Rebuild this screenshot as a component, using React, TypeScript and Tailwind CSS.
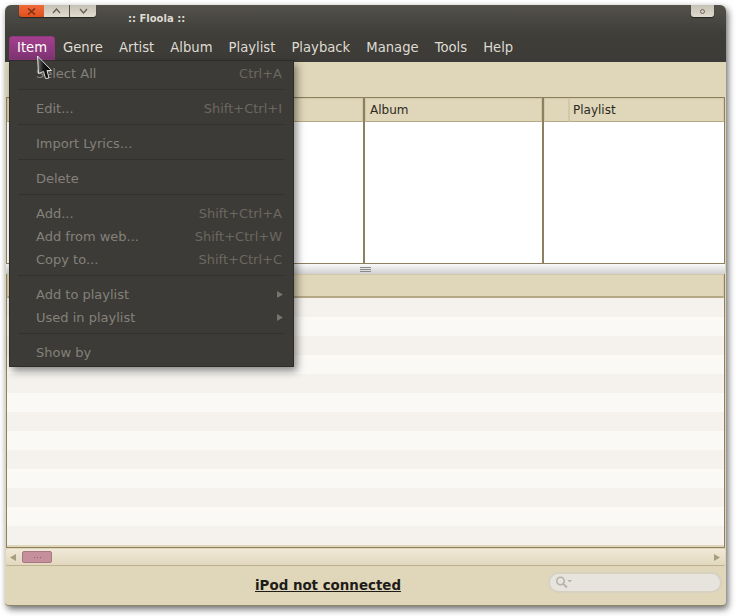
import React from "react";

const menus = ["Genre", "Artist", "Album", "Playlist", "Playback", "Manage", "Tools", "Help"];

const popup: any[] = [
  { label: "Select All", keys: "Ctrl+A" },
  "sep",
  { label: "Edit...", keys: "Shift+Ctrl+I" },
  "sep",
  { label: "Import Lyrics..." },
  "sep",
  { label: "Delete" },
  "sep",
  { label: "Add...", keys: "Shift+Ctrl+A" },
  { label: "Add from web...", keys: "Shift+Ctrl+W" },
  { label: "Copy to...", keys: "Shift+Ctrl+C" },
  "sep",
  { label: "Add to playlist", sub: true },
  { label: "Used in playlist", sub: true },
  "sep",
  { label: "Show by" },
];

const rows = Array.from({ length: 13 }, (_, i) => i);

const HeaderCell = ({ className, children }: { className?: string; children?: React.ReactNode }) => (
  <div className={`h-[24px] bg-[#e0d6b9] border border-[#d3c8a6] border-b-[#b5a985] flex items-center text-[12px] text-[#2c2a24] ${className}`}>
    {children}
  </div>
);

const ItemMenu = () => (
  <div className="absolute left-[9px] top-[60px] w-[285px] h-[307px] bg-[#3c3b37] border border-[#2e2d2a] pt-[1px] shadow-[3px_4px_8px_rgba(0,0,0,0.45)] z-10">
    {popup.map((item, i) =>
      item === "sep" ? (
        <div key={i} className="h-[12px] pt-[4px] px-[8px]">
          <div className="h-px bg-[#32312d]" />
        </div>
      ) : (
        <div key={i} className="h-[23px] flex items-center justify-between pl-[26px] pr-[11px] text-[13px] text-[#84817a]">
          <span>{item.label}</span>
          {item.keys && <span className="text-[#6b6860]">{item.keys}</span>}
          {item.sub && (
            <svg width="6" height="7" viewBox="0 0 6 7" className="-mr-[1px]">
              <path d="M0 0 L6 3.5 L0 7 Z" fill="#77746c" />
            </svg>
          )}
        </div>
      )
    )}
  </div>
);

const Cursor = () => (
  <svg width="18" height="26" viewBox="0 0 18 26" className="absolute left-[36px] top-[55px] z-20">
    <defs>
      <linearGradient id="cursorFill" x1="0" y1="0" x2="1" y2="0">
        <stop offset="0" stopColor="#777777" />
        <stop offset="0.4" stopColor="#1a1a1a" />
        <stop offset="1" stopColor="#000000" />
      </linearGradient>
    </defs>
    <path d="M1.5 1 L2.5 18.5 L7.5 16.5 L9.5 23.5 L13 23 L11 15.5 L15.5 15.5 Z" fill="url(#cursorFill)" stroke="#eeeeee" strokeWidth="0.9" strokeLinejoin="round" />
  </svg>
);

export default function App() {
  return (
    <div className="relative w-[736px] h-[616px] bg-white overflow-hidden pl-[5px] pt-[5px] font-['DejaVu_Sans',sans-serif]">
      <div className="relative w-[721px] h-[601px] rounded-t-[6px] rounded-b-[4px] flex flex-col bg-[#e0d6b9] border-b border-[#8f8568] shadow-[2px_3px_7px_rgba(0,0,0,0.6)]">
        {/* title bar + menu */}
        <div className="h-[57px] shrink-0 rounded-t-[6px] bg-gradient-to-b from-[#53514a] via-[#3f3e39] to-[#3c3b37] flex flex-col">
          <div className="h-[30px] relative flex items-start">
            <div className="ml-[14px] flex h-[12px] rounded-b-[3px] overflow-hidden shadow-[0_1px_1px_rgba(0,0,0,0.5)]">
              <div className="w-[25px] bg-gradient-to-b from-[#f2693a] to-[#e0501c] flex items-center justify-center">
                <svg width="9" height="7" viewBox="0 0 9 7"><path d="M1 0.5 L8 6.5 M8 0.5 L1 6.5" stroke="#7d3016" strokeWidth="1.5" /></svg>
              </div>
              <div className="w-[25px] bg-gradient-to-b from-[#c6c1b5] to-[#e0dbcd] flex items-center justify-center">
                <svg width="9" height="6" viewBox="0 0 9 6"><path d="M1 5 L4.5 1 L8 5" fill="none" stroke="#5f5c54" strokeWidth="1.2" /></svg>
              </div>
              <div className="w-[26px] ml-px bg-gradient-to-b from-[#c6c1b5] to-[#e0dbcd] flex items-center justify-center">
                <svg width="9" height="6" viewBox="0 0 9 6"><path d="M1 1 L4.5 5 L8 1" fill="none" stroke="#5f5c54" strokeWidth="1.2" /></svg>
              </div>
            </div>
            <span className="ml-[32px] mt-[7px] text-[10px] leading-[14px] font-bold text-[#dfdbd2]">:: Floola ::</span>
            <div className="ml-auto mr-[12px] w-[23px] h-[12px] rounded-b-[3px] bg-gradient-to-b from-[#c6c1b5] to-[#e0dbcd] flex items-center justify-center shadow-[0_1px_1px_rgba(0,0,0,0.5)]">
              <div className="w-[5px] h-[5px] rounded-full border border-[#6b685f]" />
            </div>
          </div>
          <div className="flex items-start pl-[4px] h-[27px] text-[13.2px] text-[#dfdbd2]">
            <div className="mt-[1px] h-[24px] w-[46px] pl-[7px] flex items-center rounded-t-[3px] bg-gradient-to-b from-[#a43f8e] to-[#7f3473] border border-[#8b3a7c] text-white">Item</div>
            <div className="flex ml-[8px] gap-[16px] h-[25px] items-center">
              {menus.map((m) => (
                <span key={m}>{m}</span>
              ))}
            </div>
          </div>
        </div>
        {/* toolbar strip */}
        <div className="h-[35px] shrink-0" />
        {/* browser panes */}
        <div className="mx-[1px] h-[167px] shrink-0 flex border border-[#8c8060] bg-white">
          <div className="w-[358px] border-r-2 border-[#8c8060]">
            <HeaderCell className="pl-[4px]" />
          </div>
          <div className="w-[179px] border-r-2 border-[#8c8060]">
            <HeaderCell className="pl-[4px]">Album</HeaderCell>
          </div>
          <div className="flex-1 flex items-start">
            <HeaderCell className="w-[25px]" />
            <HeaderCell className="flex-1 pl-[3px]">Playlist</HeaderCell>
          </div>
        </div>
        {/* splitter */}
        <div className="mx-[1px] h-[10px] shrink-0 bg-gradient-to-b from-[#fafafa] to-[#d0d0d0] flex items-center justify-center">
          <div className="w-[11px] h-[5px] border-y border-[#888] flex items-center">
            <div className="w-full h-px bg-[#888]" />
          </div>
        </div>
        {/* track list */}
        <div className="mx-[1px] h-[274px] shrink-0 border-x border-b border-[#8c8060] flex flex-col">
          <HeaderCell className="shrink-0 border-b-2" />
          <div>
            {rows.map((i) => (
              <div key={i} className={`h-[19px] ${i % 2 === 0 ? "bg-[#f5f2ed]" : "bg-[#faf9f6]"}`} />
            ))}
          </div>
        </div>
        {/* horizontal scrollbar */}
        <div className="mt-[1px] mx-[1px] h-[17px] shrink-0 flex items-center bg-gradient-to-b from-[#f0e9d8] to-[#e2d8be] border-b border-[#bdb18f] rounded-[2px]">
          <svg width="6" height="7" viewBox="0 0 6 7" className="ml-[4px]"><path d="M6 0 L0 3.5 L6 7 Z" fill="#a89d7f" /></svg>
          <div className="ml-[6px] w-[30px] h-[12px] rounded-[2px] bg-[#c58f9c] border border-[#a97784] flex items-center justify-center gap-[2px]">
            <div className="w-px h-px bg-[#8a5f6a]" />
            <div className="w-px h-px bg-[#8a5f6a]" />
            <div className="w-px h-px bg-[#8a5f6a]" />
          </div>
          <svg width="6" height="7" viewBox="0 0 6 7" className="ml-auto mr-[5px]"><path d="M0 0 L6 3.5 L0 7 Z" fill="#a89d7f" /></svg>
        </div>
        {/* status */}
        <div className="flex-1 relative flex items-center justify-center pr-[75px] pt-[2px]">
          <span className="text-[13.4px] font-bold underline text-[#1e1c18]">iPod not connected</span>
          <div className="absolute left-[543px] top-[6px] w-[174px] h-[21px] rounded-full bg-[#e6e4dc] border-2 border-[#d6d1c1] flex items-center pl-[5px]">
            <svg width="18" height="13" viewBox="0 0 18 13">
              <circle cx="5.5" cy="5" r="3.7" fill="none" stroke="#b4b2aa" strokeWidth="1.6" />
              <path d="M8.3 8 L12 11.5" stroke="#b4b2aa" strokeWidth="1.8" />
              <path d="M12.5 4 L17 4 L14.75 6.5 Z" fill="#b4b2aa" />
            </svg>
          </div>
        </div>
      </div>
      <ItemMenu />
      <Cursor />
    </div>
  );
}
